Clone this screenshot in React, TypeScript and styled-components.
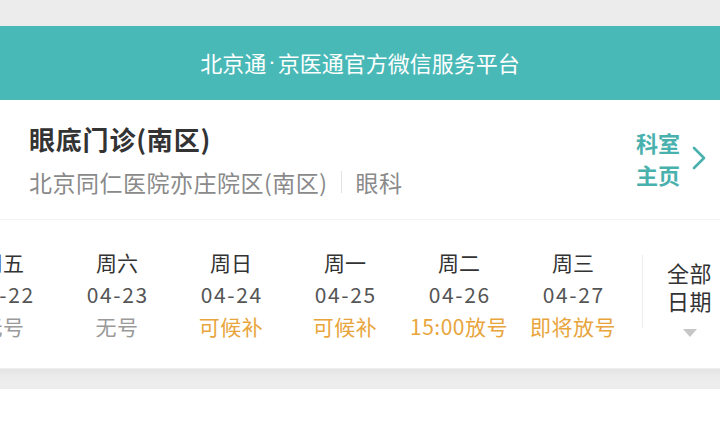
import React from "react";
import styled, { createGlobalStyle } from "styled-components";

const Global = createGlobalStyle`
  html, body { margin: 0; padding: 0; background: #ffffff; }
  body { font-family: "Noto Sans CJK SC", "Noto Sans", sans-serif; width: 720px; height: 426px; overflow: hidden; }
`;

const Page = styled.div`
  width: 720px;
  height: 426px;
  display: flex;
  flex-direction: column;
  background: #ffffff;
`;

const TopBand = styled.div`
  height: 26px;
  background: #ececec;
`;

const Header = styled.div`
  height: 74px;
  box-sizing: border-box;
  padding-bottom: 3px;
  background: #49b9b7;
  display: flex;
  align-items: center;
  justify-content: center;
  color: #ffffff;
  font-size: 22px;
`;

const Dot = styled.span`
  font-family: "Liberation Sans", sans-serif;
  margin: 0 2px;
`;

const DeptCard = styled.div`
  height: 120px;
  box-sizing: border-box;
  display: flex;
  align-items: center;
  justify-content: space-between;
  padding: 0 14px 0 29px;
  border-bottom: 1px solid #f2f2f2;
`;

const DeptInfo = styled.div`
  display: flex;
  flex-direction: column;
  gap: 12px;
`;

const DeptTitle = styled.div`
  font-size: 26px;
  font-weight: 700;
  color: #333333;
  line-height: 32px;
  letter-spacing: 0.8px;
`;

const DeptSub = styled.div`
  font-size: 23px;
  color: #8a8a8a;
  line-height: 30px;
  letter-spacing: 0.5px;
  display: flex;
  align-items: center;
`;

const SubDivider = styled.span`
  width: 1px;
  height: 22px;
  background: #e2e2e2;
  margin: 0 14px 0 13px;
`;

const HomeLink = styled.div`
  display: flex;
  align-items: center;
  gap: 10px;
  color: #49b1ad;
  margin-top: -4px;
`;

const HomeText = styled.div`
  font-size: 22px;
  font-weight: 700;
  line-height: 32px;
  width: 46px;
`;

const DateSection = styled.div`
  height: 148px;
  display: flex;
  align-items: stretch;
`;

const ScrollWindow = styled.div`
  width: 634px;
  overflow: hidden;
  flex-shrink: 0;
`;

const Track = styled.div`
  display: flex;
  margin-left: -54px;
  height: 100%;
`;

const DayCol = styled.div`
  width: 114px;
  flex-shrink: 0;
  display: flex;
  flex-direction: column;
  align-items: center;
  padding-top: 26px;
  font-size: 21px;
  line-height: 32px;
`;

const DayName = styled.div`
  color: #333333;
`;

const DayDate = styled.div`
  color: #555555;
  letter-spacing: 1.6px;
  margin-right: -1.6px;
`;

const DayStatus = styled.div<{ $available: boolean }>`
  color: ${(p) => (p.$available ? "#e8a53c" : "#9a9a9a")};
  letter-spacing: 0.5px;
`;

const VDivider = styled.div`
  width: 1px;
  background: #ececec;
  margin: 35px 0 40px 8px;
`;

const AllDates = styled.div`
  flex: 1;
  display: flex;
  flex-direction: column;
  align-items: center;
  padding: 38px 0 0 16px;
  font-size: 22px;
  line-height: 28px;
  letter-spacing: 0.5px;
  color: #333333;
`;

const Triangle = styled.div`
  width: 0;
  height: 0;
  margin-top: 15px;
  border-left: 7px solid transparent;
  border-right: 7px solid transparent;
  border-top: 8px solid #c6c6c6;
`;

const GrayBand = styled.div`
  height: 20px;
  background: linear-gradient(#e4e4e4, #ececec 40%, #ededed);
  border-top: 1px solid #efefef;
`;

const Rest = styled.div`
  flex: 1;
  background: #ffffff;
`;

const days = [
  { name: "周五", date: "04-22", status: "无号", ok: false },
  { name: "周六", date: "04-23", status: "无号", ok: false },
  { name: "周日", date: "04-24", status: "可候补", ok: true },
  { name: "周一", date: "04-25", status: "可候补", ok: true },
  { name: "周二", date: "04-26", status: "15:00放号", ok: true },
  { name: "周三", date: "04-27", status: "即将放号", ok: true },
];

export default function App() {
  return (
    <Page>
      <Global />
      <TopBand />
      <Header>
        北京通<Dot>·</Dot>京医通官方微信服务平台
      </Header>
      <DeptCard>
        <DeptInfo>
          <DeptTitle>眼底门诊(南区)</DeptTitle>
          <DeptSub>
            北京同仁医院亦庄院区(南区)
            <SubDivider />
            眼科
          </DeptSub>
        </DeptInfo>
        <HomeLink>
          <HomeText>科室主页</HomeText>
          <svg width="14" height="24" viewBox="0 0 14 24" fill="none">
            <path d="M2 2 L12 12 L2 22" stroke="#49b1ad" strokeWidth="2.6" strokeLinecap="round" strokeLinejoin="round" />
          </svg>
        </HomeLink>
      </DeptCard>
      <DateSection>
        <ScrollWindow>
          <Track>
            {days.map((d) => (
              <DayCol key={d.date}>
                <DayName>{d.name}</DayName>
                <DayDate>{d.date}</DayDate>
                <DayStatus $available={d.ok}>{d.status}</DayStatus>
              </DayCol>
            ))}
          </Track>
        </ScrollWindow>
        <VDivider />
        <AllDates>
          <div>全部</div>
          <div>日期</div>
          <Triangle />
        </AllDates>
      </DateSection>
      <GrayBand />
      <Rest />
    </Page>
  );
}
